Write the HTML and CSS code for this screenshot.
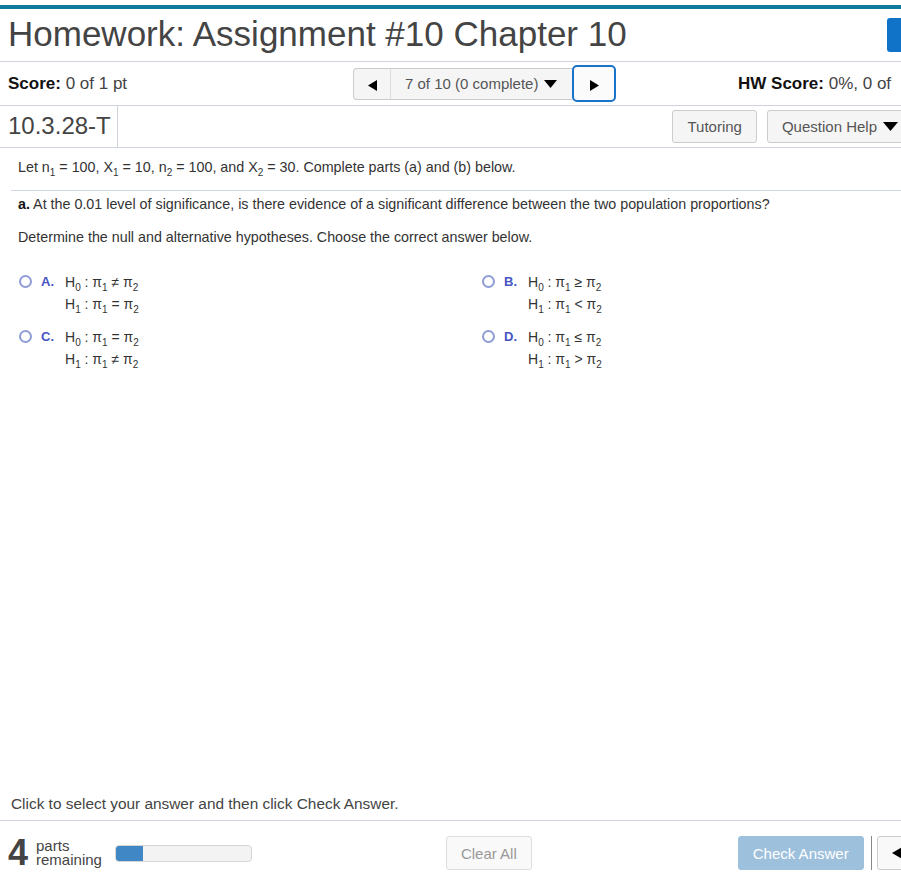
FILE: index.html
```html
<!DOCTYPE html>
<html>
<head>
<meta charset="utf-8">
<title>Homework: Assignment #10 Chapter 10</title>
<link rel="stylesheet" href="styles.css">
</head>
<body>
<div class="page">
  <div class="accent"></div>
  <div class="titlebar">
    <h1 class="title">Homework: Assignment #10 Chapter 10</h1>
    <div class="top-btn"></div>
  </div>
  <div class="scorebar">
    <div class="score"><b>Score:</b> 0 of 1 pt</div>
    <div class="pager">
      <div class="pg-group">
        <div class="pg-prev"><svg width="9" height="11" viewBox="0 0 9 11"><polygon points="9,0 9,11 0,5.5" fill="#000"/></svg></div>
        <div class="pg-mid">7 of 10 (0 complete)<svg class="caret" width="13" height="8" viewBox="0 0 13 8"><polygon points="0,0 13,0 6.5,8" fill="#000"/></svg></div>
      </div>
      <div class="pg-next"><svg width="9" height="11" viewBox="0 0 9 11"><polygon points="0,0 0,11 9,5.5" fill="#000"/></svg></div>
    </div>
    <div class="hw"><b>HW Score:</b> 0%, 0 of</div>
  </div>
  <div class="partbar">
    <div class="part-id">10.3.28-T</div>
    <div class="btn tutor">Tutoring</div>
    <div class="btn qhelp">Question Help<svg class="caret2" width="15" height="9" viewBox="0 0 15 9"><polygon points="0,0 15,0 7.5,9" fill="#000"/></svg></div>
  </div>
  <div class="work">
    <div class="stem">Let n<sub class="s">1</sub> = 100, X<sub class="s">1</sub> = 10, n<sub class="s">2</sub> = 100, and X<sub class="s">2</sub> = 30. Complete parts (a) and (b) below.</div>
    <div class="rule"></div>
    <div class="stem parta"><b>a.</b> At the 0.01 level of significance, is there evidence of a significant difference between the two population proportions?</div>
    <div class="stem determine">Determine the null and alternative hypotheses. Choose the correct answer below.</div>
    <div class="options">
      <div class="option">
        <span class="radio"></span><span class="letter">A.</span>
        <div class="math">
          <div>H<sub class="ms">0</sub> : π<sub class="ms">1</sub> ≠ π<sub class="ms">2</sub></div>
          <div>H<sub class="ms">1</sub> : π<sub class="ms">1</sub> = π<sub class="ms">2</sub></div>
        </div>
      </div>
      <div class="option">
        <span class="radio"></span><span class="letter">B.</span>
        <div class="math">
          <div>H<sub class="ms">0</sub> : π<sub class="ms">1</sub> ≥ π<sub class="ms">2</sub></div>
          <div>H<sub class="ms">1</sub> : π<sub class="ms">1</sub> &lt; π<sub class="ms">2</sub></div>
        </div>
      </div>
      <div class="option">
        <span class="radio"></span><span class="letter">C.</span>
        <div class="math">
          <div>H<sub class="ms">0</sub> : π<sub class="ms">1</sub> = π<sub class="ms">2</sub></div>
          <div>H<sub class="ms">1</sub> : π<sub class="ms">1</sub> ≠ π<sub class="ms">2</sub></div>
        </div>
      </div>
      <div class="option">
        <span class="radio"></span><span class="letter">D.</span>
        <div class="math">
          <div>H<sub class="ms">0</sub> : π<sub class="ms">1</sub> ≤ π<sub class="ms">2</sub></div>
          <div>H<sub class="ms">1</sub> : π<sub class="ms">1</sub> &gt; π<sub class="ms">2</sub></div>
        </div>
      </div>
    </div>
  </div>
  <div class="instr">Click to select your answer and then click Check Answer.</div>
  <div class="footer">
    <div class="frow">
      <div class="big4">4</div>
      <div class="parts">parts<br>remaining</div>
      <div class="progress"><div class="fill"></div></div>
      <div class="btn clear">Clear All</div>
      <div class="btn check">Check Answer</div>
      <div class="divider"></div>
      <div class="btn nextbtn"><svg width="12" height="14" viewBox="0 0 12 14"><polygon points="12,0 12,14 0,7" fill="#000"/></svg></div>
    </div>
  </div>
</div>
</body>
</html>
```
FILE: styles.css
```css
* { box-sizing: border-box; }
html, body { margin: 0; padding: 0; }
body {
  font-family: "Liberation Sans", Arial, sans-serif;
  color: #333;
  background: #fff;
  overflow: hidden;
}
.page {
  width: 901px;
  height: 880px;
  display: flex;
  flex-direction: column;
  overflow: hidden;
}
.accent {
  margin-top: 5px;
  height: 4px;
  background: #0f7a9a;
  flex-shrink: 0;
}
.titlebar {
  height: 53px;
  border-bottom: 1px solid #cfd3de;
  display: flex;
  align-items: flex-start;
  flex-shrink: 0;
}
.title {
  margin: 0;
  padding: 5px 0 0 8px;
  font-size: 35px;
  line-height: 40px;
  font-weight: normal;
  color: #444;
  white-space: nowrap;
}
.top-btn {
  margin-left: auto;
  margin-top: 9px;
  width: 14px;
  height: 34px;
  background: #1173c8;
  border-radius: 3px 0 0 3px;
  flex-shrink: 0;
}
.scorebar {
  height: 44px;
  border-bottom: 1px solid #cfd3de;
  display: flex;
  align-items: center;
  white-space: nowrap;
  flex-shrink: 0;
  overflow: hidden;
}
.score {
  width: 353px;
  flex-shrink: 0;
  padding-left: 8px;
  font-size: 17px;
  color: #444;
}
.score b, .hw b { color: #111; }
.pager {
  display: flex;
  align-items: center;
  flex-shrink: 0;
}
.pg-group {
  display: flex;
  height: 32px;
  border: 1px solid #ccc;
  border-right: 0;
  border-radius: 4px 0 0 4px;
  background: #f5f5f5;
}
.pg-prev {
  width: 37px;
  border-right: 1px solid #ddd;
  display: flex;
  align-items: center;
  justify-content: center;
  padding-top: 4px;
}
.pg-mid {
  width: 181px;
  padding-left: 14px;
  display: flex;
  align-items: center;
  font-size: 15px;
  color: #555;
}
.caret { margin-left: 6px; }
.pg-next {
  width: 44px;
  height: 37px;
  border: 2px solid #1a73c8;
  border-radius: 5px;
  background: #fbfbfb;
  display: flex;
  align-items: center;
  justify-content: center;
  padding-top: 4px;
}
.hw {
  margin-left: 122px;
  font-size: 17px;
  color: #444;
  flex-shrink: 0;
}
.partbar {
  height: 42px;
  border-bottom: 1px solid #cfd3de;
  display: flex;
  align-items: center;
  flex-shrink: 0;
  overflow: hidden;
  white-space: nowrap;
}
.part-id {
  width: 118px;
  height: 100%;
  flex-shrink: 0;
  border-right: 1px solid #cfd3de;
  padding-left: 8px;
  padding-bottom: 2px;
  display: flex;
  align-items: center;
  font-size: 24px;
  color: #444;
}
.btn {
  height: 33px;
  padding: 0 14px;
  border: 1px solid #ccc;
  border-radius: 3px;
  background: #f5f5f5;
  font-size: 15px;
  color: #555;
  display: flex;
  align-items: center;
  flex-shrink: 0;
}
.tutor { margin-left: auto; }
.qhelp { margin-left: 10px; margin-right: -12px; }
.caret2 { margin-left: 6px; }
.work {
  flex: 1;
  padding: 11px 0 0 11px;
}
.stem {
  padding-left: 7px;
  font-size: 14.3px;
  line-height: 17px;
  color: #333;
}
.s {
  font-size: 10px;
  vertical-align: -4px;
  line-height: 0;
}
.rule {
  border-top: 1px solid #cfd5e2;
  margin-top: 14px;
}
.parta { margin-top: 5px; }
.parta b { color: #111; }
.determine { margin-top: 16px; }
.options {
  margin-top: 25px;
  padding-left: 8px;
  display: grid;
  grid-template-columns: 463px 1fr;
  row-gap: 11px;
}
.option {
  display: flex;
  align-items: flex-start;
}
.radio {
  width: 13px;
  height: 13px;
  border-radius: 50%;
  border: 2px solid #8e9dd6;
  background: #fff;
  margin-top: 4px;
  flex-shrink: 0;
}
.letter {
  margin-left: 9px;
  width: 24px;
  flex-shrink: 0;
  font-weight: bold;
  font-size: 13px;
  line-height: 22px;
  color: #4655c2;
}
.math {
  font-size: 14px;
  line-height: 22px;
  color: #333;
}
.ms {
  font-size: 10px;
  vertical-align: -4px;
  line-height: 0;
}
.instr {
  flex-shrink: 0;
  padding: 0 0 8px 11px;
  font-size: 15.4px;
  line-height: 16px;
  color: #444;
  border-bottom: 1px solid #cfd3de;
}
.footer {
  flex-shrink: 0;
  height: 59px;
  padding-top: 15px;
}
.frow {
  display: flex;
  align-items: center;
  height: 34px;
  white-space: nowrap;
}
.frow > * { flex-shrink: 0; }
.big4 {
  padding-left: 8px;
  font-size: 36px;
  line-height: 36px;
  font-weight: bold;
  color: #444;
}
.parts {
  margin-left: 8px;
  font-size: 15px;
  line-height: 14.5px;
  color: #444;
}
.progress {
  margin-left: 13px;
  width: 137px;
  height: 17px;
  border: 1px solid #d6d6d6;
  border-radius: 4px;
  background: #f3f3f3;
  overflow: hidden;
}
.fill {
  width: 27px;
  height: 100%;
  background: #3f88c5;
}
.clear {
  margin-left: 194px;
  height: 34px;
  background: #f9f9f9;
  border-color: #ddd;
  color: #999;
}
.check {
  margin-left: 206px;
  height: 34px;
  background: #9dc0dc;
  border-color: #9dc0dc;
  color: #fff;
}
.divider {
  margin-left: 7px;
  width: 1px;
  height: 34px;
  background: #888;
}
.nextbtn {
  margin-left: 5px;
  width: 40px;
  height: 34px;
  background: #f9f9f9;
  border-color: #ccc;
  padding: 0 0 0 14px;
}
```
